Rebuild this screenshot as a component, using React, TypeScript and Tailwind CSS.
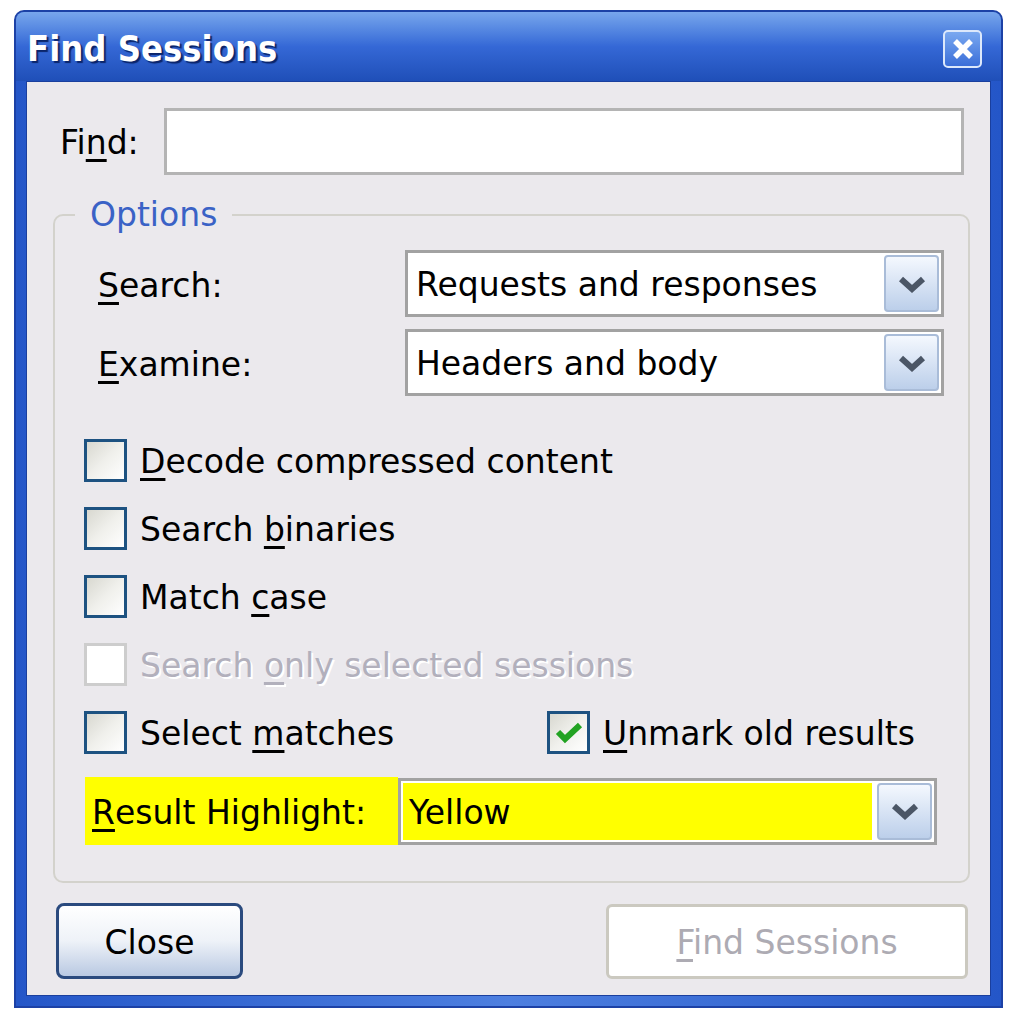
import React from "react";

const U = ({ children }: { children: React.ReactNode }) => (
  <span className="underline decoration-[3px] underline-offset-[5px]">{children}</span>
);

const Chevron = () => (
  <svg width="30" height="20" viewBox="0 0 30 20">
    <path d="M4 5 L15 15 L26 5" stroke="#4b5666" strokeWidth="6" fill="none" strokeLinejoin="miter" />
  </svg>
);

const DropBtn = () => (
  <div className="w-[55px] h-full flex items-center justify-center rounded-[4px] border-[2px] border-[#a9bcd8] bg-gradient-to-b from-[#f4f8fe] to-[#bccfea]">
    <Chevron />
  </div>
);

const Select = ({ value, yellow }: { value: string; yellow?: boolean }) => (
  <div className="w-[539px] h-[67px] border-[3px] border-[#a2a2a2] bg-white flex items-stretch p-[2px]">
    <div className={"flex-1 flex items-center pl-[6px] pt-[2px] " + (yellow ? "bg-[#ffff00] mr-[5px]" : "")}>
      <span className="text-black">{value}</span>
    </div>
    <DropBtn />
  </div>
);

const Checkbox = ({ checked, disabled }: { checked?: boolean; disabled?: boolean }) => (
  <div
    className={
      "w-[43px] h-[43px] shrink-0 border-[3px] flex items-center justify-center " +
      (disabled
        ? "border-[#cdcdcd] bg-white"
        : "border-[#1d5281] bg-gradient-to-br from-[#d8d8d0] via-[#f0f0ec] to-white")
    }
  >
    {checked && (
      <svg width="30" height="26" viewBox="0 0 30 26">
        <path d="M4 12 L11 19 L26 5" stroke="#22a322" strokeWidth="6" fill="none" />
      </svg>
    )}
  </div>
);

const CheckRow = ({ children, disabled, checked }: { children: React.ReactNode; disabled?: boolean; checked?: boolean }) => (
  <div className="h-[68px] flex items-start">
    <div className="flex items-center gap-[13px] h-[43px]">
      <Checkbox disabled={disabled} checked={checked} />
      <span className={"pt-[2px] " + (disabled ? "text-[#b2b0bc] [text-shadow:2px_2px_0_#ffffff]" : "text-black")}>{children}</span>
    </div>
  </div>
);

export default function App() {
  return (
    <div className="min-h-screen bg-white pl-[14px] pt-[10px] font-['DejaVu_Sans',sans-serif] text-[33px] leading-none">
      <div className="w-[989px] h-[998px] flex flex-col rounded-t-[10px] border-[2px] border-[#1c41a6] bg-gradient-to-r from-[#2456c8] via-[#4d7fe0] to-[#2456c8]">
        {/* Title bar */}
        <div className="h-[69px] shrink-0 flex items-center justify-between pl-[11px] pr-[19px] rounded-t-[8px] bg-gradient-to-b from-[#78a6ec] via-[#3568d6] to-[#1f4fb8]">
          <span className="pt-[4px] text-white font-bold text-[36px] font-['DejaVu_Sans_Condensed','DejaVu_Sans',sans-serif] [text-shadow:2px_2px_1px_#0a246a]">
            Find Sessions
          </span>
          <div className="mt-[4px] w-[39px] h-[38px] rounded-[5px] border-[2px] border-[#dce8fb] bg-gradient-to-b from-[#7aa8f0] to-[#3b6ed8] flex items-center justify-center">
            <svg width="22" height="22" viewBox="0 0 22 22">
              <path d="M3 3 L19 19 M19 3 L3 19" stroke="white" strokeWidth="5.5" />
            </svg>
          </div>
        </div>
        {/* Client */}
        <div className="flex-1 mx-[10px] mb-[10px] bg-[#ebe9ed] border-[1px] border-[#1a3f9e] flex flex-col">
          {/* Find row */}
          <div className="flex items-center mt-[26px] h-[67px]">
            <span className="ml-[33px] w-[104px] text-black pt-[2px]">
              Fi<U>n</U>d:
            </span>
            <div className="w-[800px] h-[67px] bg-white border-[3px] border-[#b4b4b4]" />
          </div>
          {/* Options group */}
          <fieldset className="mt-[23px] ml-[26px] w-[917px] h-[685px] border-[2px] border-[#d3d2cc] rounded-[10px] px-0 pb-0">
            <legend className="ml-[20px] px-[15px] h-[34px] leading-[34px] text-[#3a62c6]">Options</legend>
            <div className="flex flex-col pt-[18px]">
              <div className="flex items-center">
                <span className="ml-[43px] w-[307px] text-black pt-[4px]">
                  <U>S</U>earch:
                </span>
                <Select value="Requests and responses" />
              </div>
              <div className="flex items-center mt-[12px]">
                <span className="ml-[43px] w-[307px] text-black pt-[4px]">
                  <U>E</U>xamine:
                </span>
                <Select value="Headers and body" />
              </div>
              <div className="flex flex-col mt-[43px] ml-[29px]">
                <CheckRow>
                  <U>D</U>ecode compressed content
                </CheckRow>
                <CheckRow>
                  Search <U>b</U>inaries
                </CheckRow>
                <CheckRow>
                  Match <U>c</U>ase
                </CheckRow>
                <CheckRow disabled>
                  Search <U>o</U>nly selected sessions
                </CheckRow>
                <div className="flex h-[66px]">
                  <div className="w-[463px]">
                    <CheckRow>
                      Select <U>m</U>atches
                    </CheckRow>
                  </div>
                  <CheckRow checked>
                    <U>U</U>nmark old results
                  </CheckRow>
                </div>
              </div>
              <div className="flex items-center ml-[30px]">
                <div className="w-[313px] h-[68px] bg-[#ffff00] flex items-center pl-[7px] pt-[2px] text-black">
                  <U>R</U>esult Highlight:
                </div>
                <Select value="Yellow" yellow />
              </div>
            </div>
          </fieldset>
          {/* Buttons */}
          <div className="flex items-center justify-between mt-[20px] pl-[29px] pr-[22px]">
            <button className="w-[187px] h-[76px] rounded-[8px] border-[3px] border-[#2a4a7e] bg-gradient-to-b from-white via-[#eef2f8] to-[#b9c9e2] text-black pt-[2px]">
              Close
            </button>
            <button className="w-[362px] h-[75px] rounded-[6px] border-[3px] border-[#cbc9c0] bg-white text-[#adabb3] pt-[2px]">
              <U>F</U>ind Sessions
            </button>
          </div>
        </div>
      </div>
    </div>
  );
}
